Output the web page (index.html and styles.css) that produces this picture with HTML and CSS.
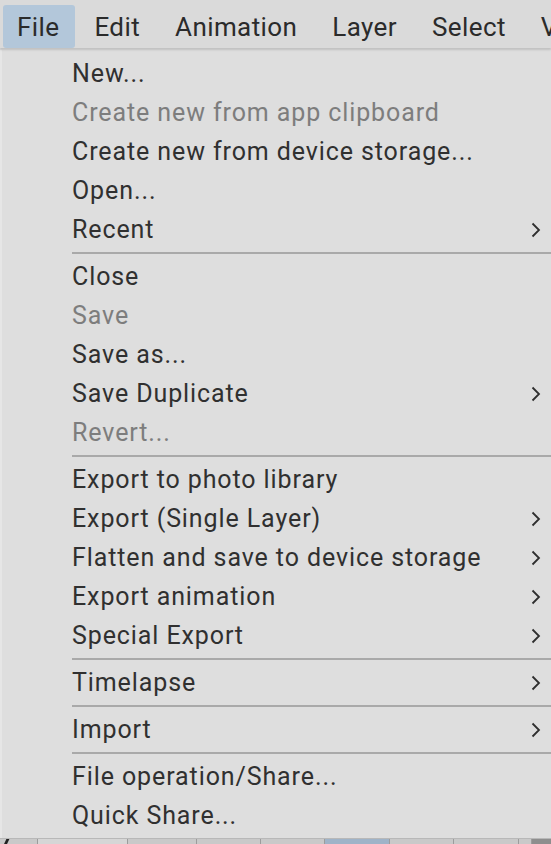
FILE: index.html
```html
<!DOCTYPE html>
<html>
<head>
<meta charset="utf-8">
<link rel="stylesheet" href="styles.css">
</head>
<body>
<div class="screen">
  <div class="menubar">
    <span class="top active">File</span>
    <span class="top">Edit</span>
    <span class="top">Animation</span>
    <span class="top">Layer</span>
    <span class="top">Select</span>
    <span class="top">View</span>
  </div>
  <div class="panel">
    <div class="group">
      <div class="item">New...</div>
      <div class="item disabled">Create new from app clipboard</div>
      <div class="item">Create new from device storage...</div>
      <div class="item">Open...</div>
      <div class="item sub">Recent<svg class="chev" viewBox="0 0 10 16"><path d="M1.5 1.5 L8 8 L1.5 14.5"/></svg></div>
    </div>
    <div class="sep"></div>
    <div class="group">
      <div class="item">Close</div>
      <div class="item disabled">Save</div>
      <div class="item">Save as...</div>
      <div class="item sub">Save Duplicate<svg class="chev" viewBox="0 0 10 16"><path d="M1.5 1.5 L8 8 L1.5 14.5"/></svg></div>
      <div class="item disabled">Revert...</div>
    </div>
    <div class="sep"></div>
    <div class="group">
      <div class="item">Export to photo library</div>
      <div class="item sub">Export (Single Layer)<svg class="chev" viewBox="0 0 10 16"><path d="M1.5 1.5 L8 8 L1.5 14.5"/></svg></div>
      <div class="item sub">Flatten and save to device storage<svg class="chev" viewBox="0 0 10 16"><path d="M1.5 1.5 L8 8 L1.5 14.5"/></svg></div>
      <div class="item sub">Export animation<svg class="chev" viewBox="0 0 10 16"><path d="M1.5 1.5 L8 8 L1.5 14.5"/></svg></div>
      <div class="item sub">Special Export<svg class="chev" viewBox="0 0 10 16"><path d="M1.5 1.5 L8 8 L1.5 14.5"/></svg></div>
    </div>
    <div class="sep"></div>
    <div class="group">
      <div class="item sub">Timelapse<svg class="chev" viewBox="0 0 10 16"><path d="M1.5 1.5 L8 8 L1.5 14.5"/></svg></div>
    </div>
    <div class="sep"></div>
    <div class="group">
      <div class="item sub">Import<svg class="chev" viewBox="0 0 10 16"><path d="M1.5 1.5 L8 8 L1.5 14.5"/></svg></div>
    </div>
    <div class="sep"></div>
    <div class="group">
      <div class="item">File operation/Share...</div>
      <div class="item">Quick Share...</div>
    </div>
  </div>
  <div class="toolbar">
    <div class="tb-cell c38"><span class="tb-mark"></span></div>
    <div class="tb-cell c90 light"></div>
    <div class="tb-cell c69"></div>
    <div class="tb-cell c64"></div>
    <div class="tb-cell c64"></div>
    <div class="tb-cell c65 blue"></div>
    <div class="tb-cell c64"></div>
    <div class="tb-cell c65"></div>
    <div class="tb-cell c13"></div>
    <div class="tb-cell rest"></div>
  </div>
</div>
</body>
</html>
```

FILE: styles.css
```css
html, body {
  margin: 0;
  padding: 0;
  background: #dcdcdc;
}
.screen {
  width: 551px;
  height: 844px;
  overflow: hidden;
  display: flex;
  flex-direction: column;
  font-family: Roboto, "Noto Sans", sans-serif;
  background: #dcdcdc;
}
.menubar {
  height: 48px;
  box-sizing: border-box;
  flex: none;
  display: flex;
  align-items: flex-start;
  padding-top: 5px;
  padding-left: 3px;
  background: #dadada;
  box-shadow: 0 2px 2px rgba(0,0,0,0.12);
  position: relative;
  z-index: 1;
  white-space: nowrap;
}
.top {
  font-size: 26px;
  letter-spacing: 0.4px;
  color: #2b2b2b;
  height: 43px;
  line-height: 45px;
  padding: 0 16px 0 14px;
  margin-right: 5px;
  border-radius: 3px;
  flex: none;
}
.top.active {
  background: #b3c7da;
}
.panel {
  flex: none;
  height: 788px;
  margin-top: 2px;
  padding-top: 4px;
  padding-left: 70px;
  background: #dedede;
  border-left: 2px solid #e6e6e6;
  box-sizing: border-box;
}
.group {
  display: flex;
  flex-direction: column;
}
.item {
  height: 39px;
  display: flex;
  align-items: center;
  justify-content: space-between;
  font-size: 25px;
  letter-spacing: 0.9px;
  color: #303030;
  padding-right: 10px;
}
.item.disabled {
  color: #7d7d7d;
}
.chev {
  width: 10px;
  height: 16px;
  fill: none;
  stroke: #2e2e2e;
  stroke-width: 1.8;
}
.sep {
  height: 8px;
  display: flex;
  align-items: center;
}
.sep::before {
  content: "";
  display: block;
  width: 100%;
  height: 1.5px;
  background: #a9a9a9;
}
.toolbar {
  flex: 1;
  display: flex;
  background: #c9c9c9;
  border-top: 1px solid #b8b8b8;
}
.tb-cell {
  border-right: 1px solid #9c9c9c;
  height: 100%;
  box-sizing: border-box;
  flex: none;
}
.c38 { width: 38px; position: relative; }
.c90 { width: 90px; }
.c69 { width: 69px; }
.c64 { width: 64px; }
.c65 { width: 65px; }
.c13 { width: 13px; }
.light { background: #d6d6d6; }
.blue { background: #9fb3c8; }
.rest { flex: 1; border-right: none; background: #8e8e8e; }
.tb-mark {
  position: absolute;
  left: 5px;
  top: 0;
  width: 3px;
  height: 6px;
  background: #222;
  transform: skewX(-25deg);
}
```
